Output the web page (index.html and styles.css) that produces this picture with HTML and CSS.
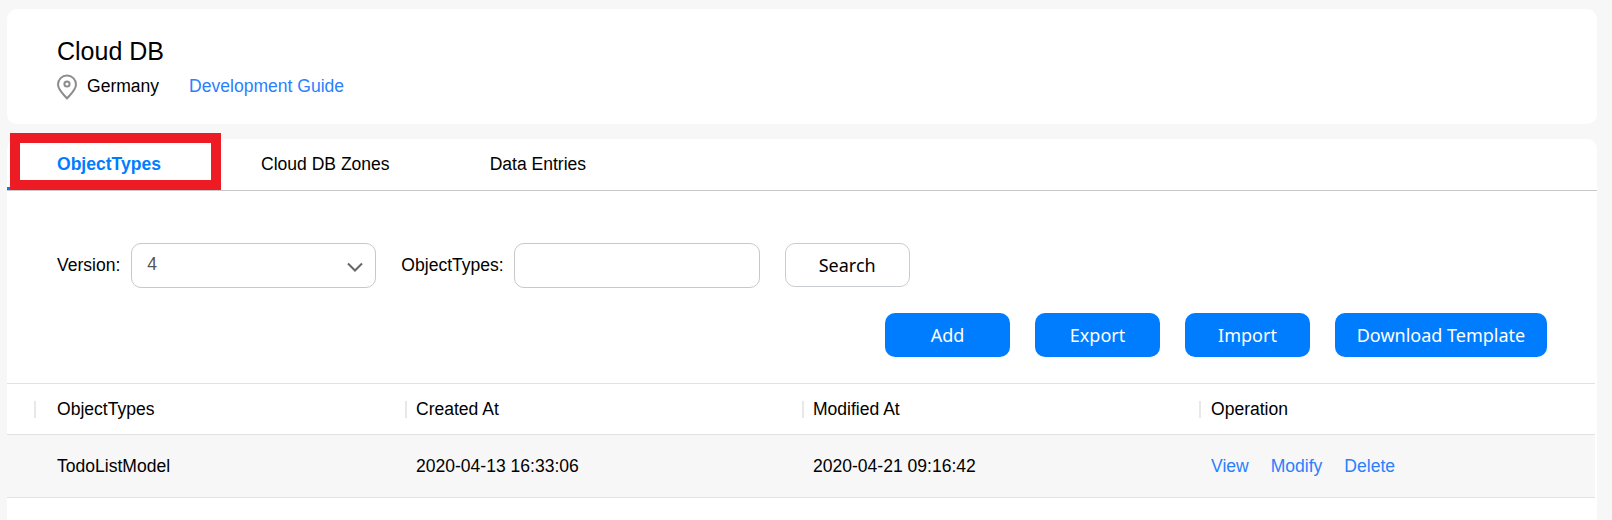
FILE: index.html
```html
<!DOCTYPE html>
<html lang="en">
<head>
<meta charset="utf-8">
<title>Cloud DB</title>
<link rel="stylesheet" href="styles.css">
</head>
<body>
<main class="page">
  <section class="panel header">
    <h1 class="title">Cloud DB</h1>
    <div class="meta">
      <svg class="pin" width="22" height="26" viewBox="0 0 22 26" fill="none" stroke="#8c8c8c" stroke-width="2"><path d="M11 24.500C7 19.800 2 15.600 2 10.500a9 9 0 0 1 18 0c0 5.100-5 9.300-9 14z" stroke-linejoin="round"/><circle cx="11" cy="10" r="2.600"/></svg>
      <span class="region">Germany</span>
      <a class="link">Development Guide</a>
    </div>
  </section>
  <section class="panel content">
    <nav class="tabs">
      <a class="tab active">ObjectTypes</a>
      <a class="tab">Cloud DB Zones</a>
      <a class="tab t3">Data Entries</a>
      <span class="highlight"></span>
    </nav>
    <div class="filters">
      <label class="lbl">Version:</label>
      <div class="select"><span>4</span><svg class="chev" width="16" height="10" viewBox="0 0 16 10" fill="none" stroke="#666" stroke-width="2"><path d="M1 1.500l7 7 7-7"/></svg></div>
      <label class="lbl lbl2">ObjectTypes:</label>
      <div class="input"></div>
      <button class="btn ghost">Search</button>
    </div>
    <div class="actions">
      <button class="btn primary">Add</button>
      <button class="btn primary">Export</button>
      <button class="btn primary">Import</button>
      <button class="btn primary wide">Download Template</button>
    </div>
    <div class="table">
      <div class="row head">
        <div></div>
        <div class="cell first"><i class="sep"></i><span>ObjectTypes</span></div>
        <div class="cell"><i class="sep"></i><span>Created At</span></div>
        <div class="cell"><i class="sep"></i><span>Modified At</span></div>
        <div class="cell op"><i class="sep"></i><span>Operation</span></div>
      </div>
      <div class="row body">
        <div></div>
        <div class="cell first nosep">TodoListModel</div>
        <div class="cell nosep">2020-04-13 16:33:06</div>
        <div class="cell nosep">2020-04-21 09:16:42</div>
        <div class="cell nosep ops"><a class="link">View</a><a class="link">Modify</a><a class="link">Delete</a></div>
      </div>
    </div>
  </section>
</main>
</body>
</html>
```
FILE: styles.css
```css
* { box-sizing: border-box; }
html, body { margin: 0; height: 100%; }
body { background: #f7f7f7; color: #000; font-family: "Liberation Sans", Arial, sans-serif; font-size: 17.55px; overflow: hidden; }
.page { padding: 9px 15px 0 7px; }
.panel { background: #fff; border-radius: 10px; }
.header { height: 115px; padding: 28px 50px 0; margin-bottom: 15px; }
.title { margin: 0; font-size: 25px; font-weight: 400; line-height: 28px; }
.meta { display: flex; align-items: center; height: 28px; margin-top: 7px; }
.pin { margin-left: -1px; margin-right: 9px; margin-top: 1px; }
.region { margin-right: 30px; }
.link { color: #2a7fff; }
.content { height: 381px; border-radius: 10px 10px 0 0; }
.tabs { position: relative; display: flex; height: 52px; border-bottom: 1px solid #c8c8c8; align-items: center; padding: 0 0 1px 50px; }
.tab { white-space: nowrap; }
.active { color: #007dff; font-weight: 700; width: 204px; }
.t3 { margin-left: 100px; }
.tabs::before { content: ""; position: absolute; left: 0; bottom: 0; width: 100px; height: 3px; background: #007dff; }
.highlight { position: absolute; left: 3px; top: -6px; width: 211px; height: 57px; border: 10px solid #ed1c24; }
.filters { display: flex; align-items: flex-start; padding: 52px 0 0 50px; height: 122px; }
.lbl { line-height: 45px; white-space: nowrap; }
.select { width: 245px; height: 45px; margin-left: 11px; border: 1px solid #c8c8c8; border-radius: 10px; display: flex; justify-content: space-between; align-items: center; padding: 0 12px 0 15px; color: #555; }
.select span { position: relative; top: -1px; }
.chev { margin-top: 2px; }
.lbl2 { margin-left: 25px; }
.input { width: 246px; height: 45px; margin-left: 10px; border: 1px solid #c8c8c8; border-radius: 10px; }
.btn { height: 44px; width: 125px; border-radius: 10px; font-family: "Noto Sans", sans-serif; font-size: 18px; padding: 0; }
.ghost { margin-left: 25px; background: #fff; border: 1px solid #c8ccd0; color: #000; }
.actions { display: flex; justify-content: flex-end; gap: 25px; padding-right: 50px; height: 70px; }
.primary { background: #007dff; border: 0; color: #fff; }
.wide { width: 212px; }
.table { width: 1588px; border-top: 1px solid #e2e2e2; }
.row { display: grid; grid-template-columns: 27px 371px 397px 397px 1fr; }
.head { height: 51px; padding-top: 1px; border-bottom: 1px solid #e2e2e2; }
.body { height: 63px; background: #f7f7f7; border-bottom: 1px solid #e2e2e2; }
.cell { display: flex; align-items: center; }
.sep { width: 2px; height: 17px; background: #e8e8e8; margin-right: 9px; }
.first .sep { margin-right: 21px; }
.op .sep { margin-right: 10px; }
.nosep { padding-left: 11px; }
.nosep.first { padding-left: 23px; }
.nosep.ops { padding-left: 12px; }
.ops .link { margin-right: 22px; }
```
